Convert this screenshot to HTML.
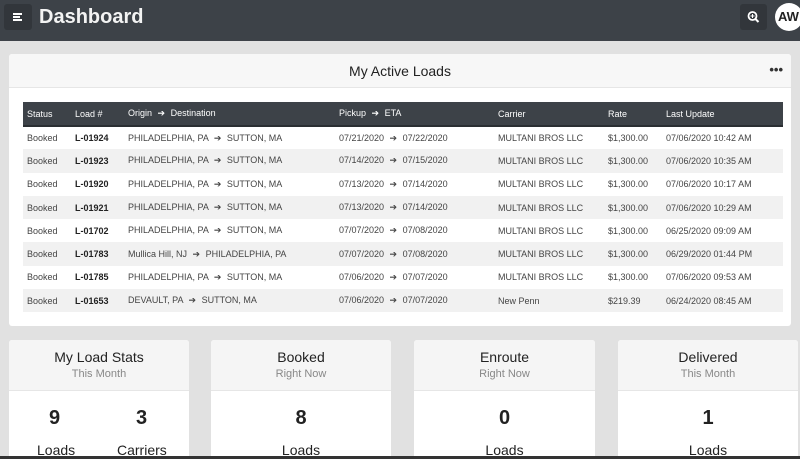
<!DOCTYPE html>
<html><head><style>
*{margin:0;padding:0;box-sizing:border-box}
body{width:800px;height:459px;overflow:hidden;background:#e1e1e1;font-family:"Liberation Sans",sans-serif;color:#333;position:relative}
.top{position:absolute;left:0;top:0;width:800px;height:41px;background:#3d4248}
.mb{position:absolute;left:4px;top:4px;width:28px;height:26px;background:#32363b;border-radius:3px}
.mb i{position:absolute;left:9px;height:1.5px;background:#fff}
.title{position:absolute;left:39px;top:6px;font-size:20px;font-weight:bold;color:#f3f3f3}
.sb{position:absolute;left:740px;top:4px;width:27px;height:26px;background:#32363b;border-radius:3px}
.av{position:absolute;left:775px;top:3px;width:28px;height:28px;border-radius:50%;background:#fff;color:#222;font-weight:bold;font-size:13px;line-height:28px;padding-left:3px}
.card{position:absolute;left:9px;top:54px;width:782px;height:272px;background:#fff;border-radius:3px}
.ch{height:34px;background:#f7f7f7;border-bottom:1px solid #e6e6e6;text-align:center;font-size:14px;line-height:34px;color:#222;border-radius:3px 3px 0 0}
.dots{position:absolute;right:8px;top:0;font-size:13px;font-weight:bold;line-height:32px}
table{position:absolute;left:14px;top:48px;width:760px;border-collapse:collapse;font-size:9px}
th{background:#3d4248;color:#fff;font-weight:normal;text-align:left;height:24px;padding-left:4px;border-bottom:2px solid #2a2e32}
td{height:23.3px;padding-left:4px;color:#444}
tr:nth-child(odd) td{background:#f1f1f1}
td b{color:#222}
.a{font-size:9px;color:#444;padding:0 3px}
.s{position:absolute;top:340px;height:119px;background:#fff;border-radius:3px;text-align:center}
.sh{height:51px;background:#f5f5f5;border-bottom:1px solid #e6e6e6;padding-top:9px;border-radius:3px 3px 0 0}
.sh div{font-size:14px;color:#222}
.sh span{font-size:11px;color:#888;display:block;margin-top:3px}
.n{font-size:20px;font-weight:bold;color:#222;position:absolute;top:67px}
.l{font-size:14px;color:#222;position:absolute;top:102px}
.bot{position:absolute;left:0;top:456px;width:800px;height:3px;background:#333}
</style></head><body>
<div class="top">
<div class="mb"><i style="top:9px;width:9px"></i><i style="top:12px;width:7px"></i><i style="top:15px;width:9px"></i></div>
<div class="title">Dashboard</div>
<div class="sb"><svg width="27" height="26"><circle cx="12.5" cy="12" r="4" stroke="#fff" stroke-width="1.8" fill="none"/><line x1="15.5" y1="15" x2="18.5" y2="18" stroke="#fff" stroke-width="2"/><line x1="12.5" y1="10" x2="12.5" y2="14" stroke="#fff"/><line x1="10.5" y1="12" x2="14.5" y2="12" stroke="#fff"/></svg></div>
<div class="av">AW</div>
</div>
<div class="card">
<div class="ch">My Active Loads</div><div class="dots">•••</div>
<table>
<tr><th style="width:48px">Status</th><th style="width:53px">Load #</th><th style="width:211px">Origin <span class="a" style="color:#fff">➔</span> Destination</th><th style="width:159px">Pickup <span class="a" style="color:#fff">➔</span> ETA</th><th style="width:110px">Carrier</th><th style="width:58px">Rate</th><th>Last Update</th></tr>
<tr><td>Booked</td><td><b>L-01924</b></td><td>PHILADELPHIA, PA <span class="a">➔</span> SUTTON, MA</td><td>07/21/2020 <span class="a">➔</span> 07/22/2020</td><td>MULTANI BROS LLC</td><td>$1,300.00</td><td>07/06/2020 10:42 AM</td></tr>
<tr><td>Booked</td><td><b>L-01923</b></td><td>PHILADELPHIA, PA <span class="a">➔</span> SUTTON, MA</td><td>07/14/2020 <span class="a">➔</span> 07/15/2020</td><td>MULTANI BROS LLC</td><td>$1,300.00</td><td>07/06/2020 10:35 AM</td></tr>
<tr><td>Booked</td><td><b>L-01920</b></td><td>PHILADELPHIA, PA <span class="a">➔</span> SUTTON, MA</td><td>07/13/2020 <span class="a">➔</span> 07/14/2020</td><td>MULTANI BROS LLC</td><td>$1,300.00</td><td>07/06/2020 10:17 AM</td></tr>
<tr><td>Booked</td><td><b>L-01921</b></td><td>PHILADELPHIA, PA <span class="a">➔</span> SUTTON, MA</td><td>07/13/2020 <span class="a">➔</span> 07/14/2020</td><td>MULTANI BROS LLC</td><td>$1,300.00</td><td>07/06/2020 10:29 AM</td></tr>
<tr><td>Booked</td><td><b>L-01702</b></td><td>PHILADELPHIA, PA <span class="a">➔</span> SUTTON, MA</td><td>07/07/2020 <span class="a">➔</span> 07/08/2020</td><td>MULTANI BROS LLC</td><td>$1,300.00</td><td>06/25/2020 09:09 AM</td></tr>
<tr><td>Booked</td><td><b>L-01783</b></td><td>Mullica Hill, NJ <span class="a">➔</span> PHILADELPHIA, PA</td><td>07/07/2020 <span class="a">➔</span> 07/08/2020</td><td>MULTANI BROS LLC</td><td>$1,300.00</td><td>06/29/2020 01:44 PM</td></tr>
<tr><td>Booked</td><td><b>L-01785</b></td><td>PHILADELPHIA, PA <span class="a">➔</span> SUTTON, MA</td><td>07/06/2020 <span class="a">➔</span> 07/07/2020</td><td>MULTANI BROS LLC</td><td>$1,300.00</td><td>07/06/2020 09:53 AM</td></tr>
<tr><td>Booked</td><td><b>L-01653</b></td><td>DEVAULT, PA <span class="a">➔</span> SUTTON, MA</td><td>07/06/2020 <span class="a">➔</span> 07/07/2020</td><td>New Penn</td><td>$219.39</td><td>06/24/2020 08:45 AM</td></tr>
</table>
</div>
<div class="s" style="left:9px;width:180px"><div class="sh"><div>My Load Stats</div><span>This Month</span></div><div class="n" style="left:40px">9</div><div class="n" style="left:127px">3</div><div class="l" style="left:28px">Loads</div><div class="l" style="left:108px">Carriers</div></div>
<div class="s" style="left:211px;width:180px"><div class="sh"><div>Booked</div><span>Right Now</span></div><div class="n" style="width:100%">8</div><div class="l" style="width:100%">Loads</div></div>
<div class="s" style="left:414px;width:181px"><div class="sh"><div>Enroute</div><span>Right Now</span></div><div class="n" style="width:100%">0</div><div class="l" style="width:100%">Loads</div></div>
<div class="s" style="left:618px;width:180px"><div class="sh"><div>Delivered</div><span>This Month</span></div><div class="n" style="width:100%">1</div><div class="l" style="width:100%">Loads</div></div>
<div class="bot"></div>
</body></html>
